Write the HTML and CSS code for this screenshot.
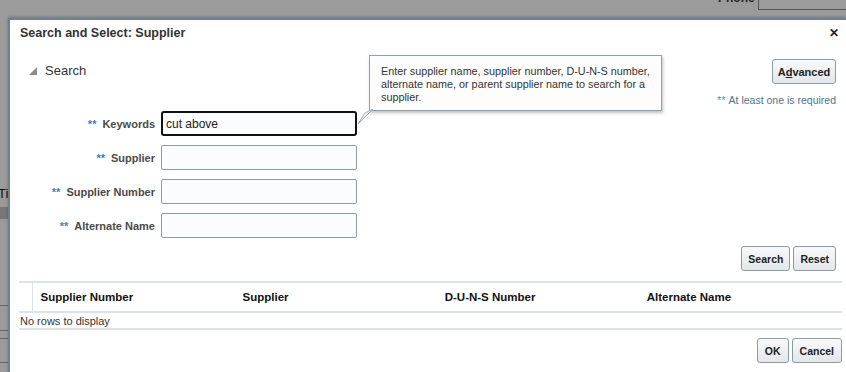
FILE: index.html
```html
<!DOCTYPE html>
<html lang="en">
<head>
    <meta charset="UTF-8">
    <meta name="viewport" content="width=device-width, initial-scale=1.0">
    <title>Search and Select: Supplier</title>
    <link rel="stylesheet" href="styles.css">
</head>
<body>
    <!-- page behind the modal -->
    <div class="backdrop">
        <span class="bg-phone">Phone</span>
        <div class="bg-field"></div>
        <span class="bg-title">Ti</span>
        <div class="bg-bar"></div>
        <div class="bg-line l1"></div>
        <div class="bg-line l2"></div>
        <div class="bg-line l3"></div>
        <div class="bg-line l4"></div>
    </div>

    <div class="dialog">
        <div class="dialog-header">
            <h1>Search and Select: Supplier</h1>
            <span class="close">&#x2715;</span>
        </div>

        <div class="search-head">
            <div class="disclose">
                <span class="tri"></span>
                <span>Search</span>
            </div>
            <div class="adv-col">
                <button class="btn">A<u>d</u>vanced</button>
                <div class="required"><span class="req">**</span>At least one is required</div>
            </div>
        </div>

        <div class="form">
            <label class="lbl"><span class="req">**</span>Keywords</label>
            <input class="field focused" type="text" value="cut above">
            <label class="lbl"><span class="req">**</span>Supplier</label>
            <input class="field" type="text">
            <label class="lbl"><span class="req">**</span>Supplier Number</label>
            <input class="field" type="text">
            <label class="lbl"><span class="req">**</span>Alternate Name</label>
            <input class="field" type="text">
        </div>

        <div class="btn-row">
            <button class="btn">Search</button>
            <button class="btn">Reset</button>
        </div>

        <table class="results">
            <thead>
                <tr>
                    <th class="sel"></th>
                    <th>Supplier Number</th>
                    <th>Supplier</th>
                    <th>D-U-N-S Number</th>
                    <th>Alternate Name</th>
                </tr>
            </thead>
            <tbody>
                <tr><td colspan="5" class="empty">No rows to display</td></tr>
            </tbody>
        </table>

        <div class="btn-row footer">
            <button class="btn">OK</button>
            <button class="btn">Cancel</button>
        </div>

        <div class="tooltip">
            Enter supplier name, supplier number, D-U-N-S number, alternate name, or parent supplier name to search for a supplier.
            <svg class="tail" width="18" height="16" viewBox="0 0 18 16">
                <polygon points="16,0 1,15 8,4" fill="#fdfdfd" stroke="#9aa9b8" stroke-width="1"/>
            </svg>
        </div>
    </div>
</body>
</html>
```

FILE: styles.css
```css
body {
    margin: 0;
    width: 846px;
    height: 372px;
    overflow: hidden;
    font-family: "Liberation Sans", Arial, sans-serif;
    background-color: #9b9b9b;
    color: #333;
    position: relative;
}
.backdrop {
    position: absolute;
    inset: 0;
}
.bg-phone {
    position: absolute;
    left: 718px;
    top: -9px;
    font-size: 12px;
    font-weight: bold;
    color: #222;
}
.bg-field {
    position: absolute;
    left: 758px;
    top: -2px;
    width: 100px;
    height: 10px;
    border: 1px solid #555;
}
.bg-title {
    position: absolute;
    left: -2px;
    top: 186px;
    font-size: 13px;
    color: #111;
}
.bg-bar {
    position: absolute;
    left: 0;
    top: 207px;
    width: 9px;
    height: 12px;
    background: #777;
}
.bg-line {
    position: absolute;
    left: 0;
    width: 9px;
    height: 1px;
    background: #666;
}
.l1 { top: 305px; }
.l2 { top: 330px; }
.l3 { top: 338px; }
.l4 { top: 362px; }

.dialog {
    position: absolute;
    left: 8px;
    top: 18px;
    width: 836px;
    height: 370px;
    background: white;
    border-top: 2px solid #6e8194;
    border-left: 2px solid #6e8194;
    box-shadow: 0 -1px 3px rgba(0,0,0,0.25);
}
.dialog-header {
    display: flex;
    justify-content: space-between;
    align-items: center;
    height: 26px;
    padding: 0 0 0 10px;
}
h1 {
    margin: 0;
    font-size: 12.5px;
    font-weight: bold;
    color: #333;
}
.close {
    margin-right: 7px;
    font-size: 12px;
    font-weight: bold;
    color: #222;
}
.search-head {
    display: flex;
    justify-content: space-between;
    padding: 12px 0 0 19px;
}
.disclose {
    display: flex;
    align-items: center;
    gap: 8px;
    font-size: 13px;
    color: #333;
    margin-top: 5px;
    height: 14px;
}
.tri {
    width: 0;
    height: 0;
    border-left: 8px solid transparent;
    border-bottom: 8px solid #8c8c8c;
    margin-top: 2px;
}
.adv-col {
    display: flex;
    flex-direction: column;
    align-items: flex-end;
    margin-right: 10px;
    margin-top: 1px;
}
.btn {
    font-family: "Liberation Sans", Arial, sans-serif;
    font-size: 10.5px;
    font-weight: bold;
    color: #222;
    background: linear-gradient(#f8f9fa, #e3e7ea);
    border: 1px solid #8b9aa7;
    border-radius: 3px;
    height: 24px;
    padding: 0 6px;
    cursor: pointer;
}
.adv-col .btn {
    width: 64px;
    height: 25px;
    padding: 0;
    font-size: 11px;
}
.required {
    margin-top: 10px;
    font-size: 10.5px;
    color: #4f7291;
}
.required .req {
    margin-right: 3px;
    font-weight: normal;
    color: #4f8fc4;
}
.req {
    color: #3e7fc1;
    font-weight: bold;
    font-size: 11px;
    margin-right: 6px;
}
.form {
    display: grid;
    grid-template-columns: 145px 196px;
    column-gap: 6px;
    row-gap: 9px;
    margin-top: 5px;
    align-items: center;
}
.lbl {
    text-align: right;
    font-size: 11px;
    font-weight: bold;
    color: #4a4a4a;
}
.field {
    box-sizing: border-box;
    height: 25px;
    border: 1px solid #8a9ba6;
    border-radius: 2px;
    background: #fbfcfe;
    padding: 0 4px;
    font-family: "Liberation Sans", Arial, sans-serif;
    font-size: 12px;
    color: #222;
    outline: none;
}
.field.focused {
    border: 2px solid #111;
    border-radius: 3px;
    padding: 0 3px;
}
.btn-row {
    display: flex;
    justify-content: flex-end;
    gap: 3px;
    margin-top: 8px;
    margin-right: 10px;
}
.btn-row .btn {
    height: 25px;
}
.results {
    border-collapse: collapse;
    margin: 10px 0 0 9px;
    width: 823px;
    font-size: 11.5px;
}
.results th {
    text-align: left;
    font-weight: bold;
    color: #111;
    height: 28px;
    padding: 0 0 0 7px;
    border-top: 2px solid #dbe2e8;
    border-bottom: 2px solid #dbe2e8;
    width: 201px;
}
.results th.sel {
    width: 14px;
    padding: 0;
    border-right: 1px solid #dbe2e8;
}
.results td.empty {
    font-size: 11px;
    color: #333;
    height: 15px;
    padding: 0 0 0 1px;
    border-bottom: 2px solid #dbe2e8;
}
.footer {
    margin-top: 8px;
    margin-right: 4px;
}
.footer .btn {
    padding: 0 7px;
}
.tooltip {
    position: absolute;
    left: 359px;
    top: 35px;
    box-sizing: border-box;
    width: 293px;
    height: 56px;
    padding: 9px 4px 0 11px;
    background: #fdfdfd;
    border: 1px solid #8fa0b2;
    box-shadow: 1px 2px 3px rgba(0,0,0,0.25);
    font-size: 10.8px;
    line-height: 13px;
    color: #333;
}
.tail {
    position: absolute;
    left: -13px;
    bottom: -15px;
}
```
